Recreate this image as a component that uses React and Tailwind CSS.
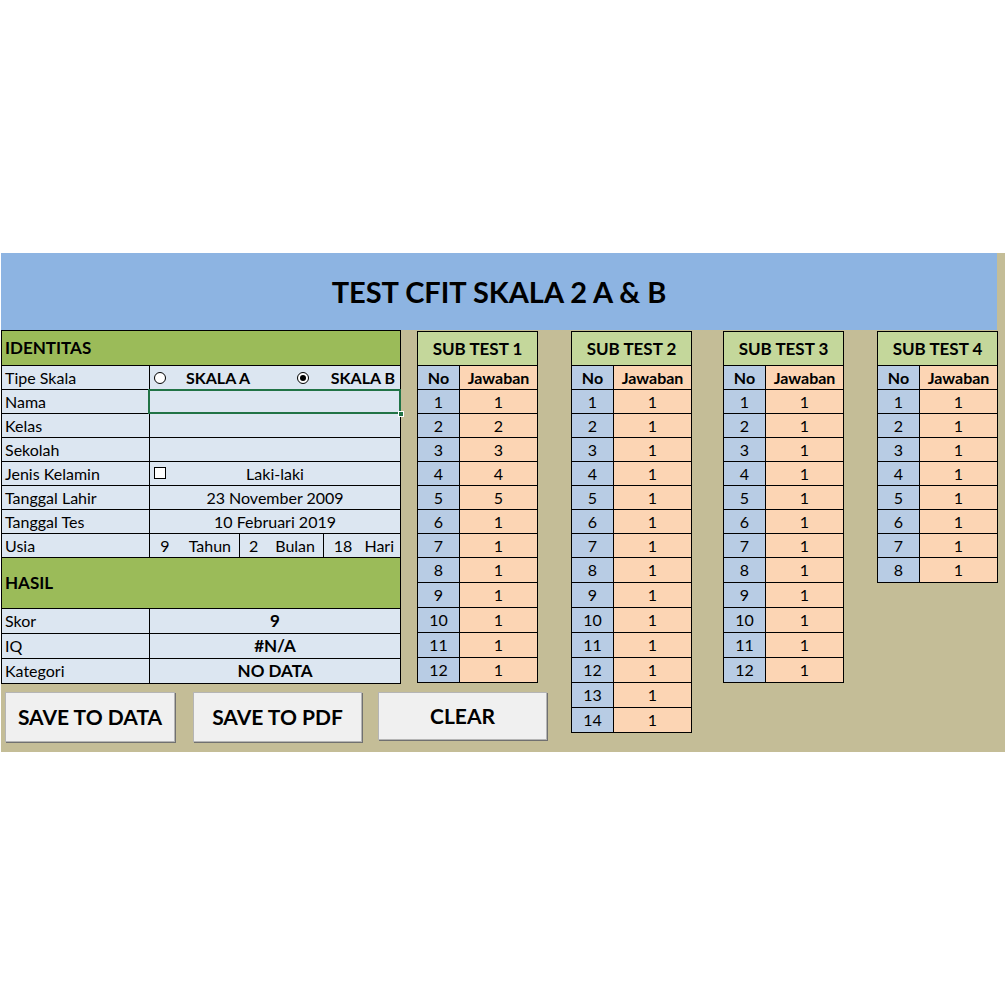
import React from "react";

const t1 = [1, 2, 3, 4, 5, 1, 1, 1, 1, 1, 1, 1];
const t2 = Array(14).fill(1);
const t3 = Array(12).fill(1);
const t4 = Array(8).fill(1);

function SubTable({ title, answers }) {
  return (
    <div className="mt-[1px] w-[121px] border-l border-r border-black">
      <div className="h-[35px] border-t border-b border-black bg-[#C4D79B] flex items-center justify-center font-bold text-[17px]">
        {title}
      </div>
      <div className="flex h-[24px] border-b border-black font-bold text-[16px]">
        <div className="w-[42px] border-r border-black bg-[#B8CCE4] flex items-center justify-center">No</div>
        <div className="flex-1 bg-[#FCD5B4] flex items-center justify-center">Jawaban</div>
      </div>
      {answers.map((a, i) => (
        <div key={i} className={`flex border-b border-black text-[16px] ${i < 7 ? "h-[24px]" : "h-[25px]"}`}>
          <div className="w-[42px] border-r border-black bg-[#B8CCE4] flex items-center justify-center">{i + 1}</div>
          <div className="flex-1 bg-[#FCD5B4] flex items-center justify-center">{a}</div>
        </div>
      ))}
    </div>
  );
}

function Row({ label, h = "h-[24px]", children, valueClass = "" }) {
  return (
    <div className={`flex border-b border-black ${h}`}>
      <div className="w-[148px] shrink-0 border-r border-black flex items-center pl-[3px] text-[16px]">{label}</div>
      <div className={`flex-1 relative flex items-center ${valueClass}`}>{children}</div>
    </div>
  );
}

function Radio({ checked }) {
  return (
    <span className="w-[12px] h-[12px] rounded-full border border-black bg-white flex items-center justify-center shrink-0">
      {checked && <span className="w-[6px] h-[6px] rounded-full bg-black" />}
    </span>
  );
}

function Button({ children, w, h = "h-[50px]" }) {
  return (
    <div className={`${w} ${h} shrink-0 bg-[#F0F0F0] border border-[#B5B5B5] shadow-[1px_1px_0_#707070] flex items-center justify-center font-bold text-[21px]`}>
      {children}
    </div>
  );
}

export default function App() {
  return (
    <div className="w-[1005px] h-[1005px] bg-white pt-[253px] font-['Lato',sans-serif] text-black">
      <div className="ml-[1px] w-[1004px] bg-[#C4BD97] pb-[10px]">
        <div className="w-[996px] h-[77px] bg-[#8DB4E2] flex items-center justify-center font-bold text-[29px]">
          TEST CFIT SKALA 2 A &amp; B
        </div>
        <div className="grid grid-cols-[400px_16px_121px_33px_121px_31px_121px_33px_121px] items-start">
          {/* Left panel */}
          <div className="col-start-1 row-start-1 w-[400px] border-l border-r border-black bg-[#DCE6F1]">
            <div className="h-[36px] border-t border-b border-black bg-[#9BBB59] flex items-center pl-[3px] font-bold text-[17px]">
              IDENTITAS
            </div>
            <Row label="Tipe Skala">
              <span className="ml-[4px]"><Radio /></span>
              <span className="ml-[20px] font-bold text-[16px]">SKALA A</span>
              <span className="ml-[47px]"><Radio checked /></span>
              <span className="ml-auto mr-[5px] font-bold text-[16px]">SKALA B</span>
            </Row>
            <Row label="Nama">
              <div className="absolute -left-[2px] -top-[1px] -right-[1px] -bottom-[1px] border-2 border-[#217346]" />
              <div className="absolute -right-[4px] -bottom-[4px] w-[6px] h-[6px] bg-[#217346] border border-white" />
            </Row>
            <Row label="Kelas" />
            <Row label="Sekolah" />
            <Row label="Jenis Kelamin" valueClass="justify-center text-[16px]">
              <span className="absolute left-[4px] top-[5px] w-[12px] h-[12px] border border-black bg-white" />
              <span>Laki-laki</span>
            </Row>
            <Row label="Tanggal Lahir" valueClass="justify-center text-[16px]">
              23 November 2009
            </Row>
            <Row label="Tanggal Tes" valueClass="justify-center text-[16px]">
              10 Februari 2019
            </Row>
            <Row label="Usia" valueClass="text-[16px] items-stretch">
              <div className="w-[90px] border-r border-black flex items-center justify-end gap-[19px] pr-[8px]">
                <span>9</span>
                <span>Tahun</span>
              </div>
              <div className="w-[84px] border-r border-black flex items-center justify-end gap-[17px] pr-[8px]">
                <span>2</span>
                <span>Bulan</span>
              </div>
              <div className="flex-1 flex items-center justify-end gap-[12px] pr-[6px]">
                <span>18</span>
                <span>Hari</span>
              </div>
            </Row>
            <div className="h-[51px] border-b border-black bg-[#9BBB59] flex items-center pl-[3px] font-bold text-[17px]">
              HASIL
            </div>
            <Row label="Skor" h="h-[25px]" valueClass="justify-center font-bold text-[17px]">9</Row>
            <Row label="IQ" h="h-[25px]" valueClass="justify-center font-bold text-[17px]">#N/A</Row>
            <Row label="Kategori" h="h-[25px]" valueClass="justify-center font-bold text-[17px]">NO DATA</Row>
          </div>

          {/* Buttons */}
          <div className="col-start-1 col-end-4 row-start-2 flex mt-[8px] ml-[4px]">
            <Button w="w-[170px]">SAVE TO DATA</Button>
            <div className="ml-[18px] shrink-0"><Button w="w-[169px]">SAVE TO PDF</Button></div>
            <div className="ml-[16px] shrink-0"><Button w="w-[169px]" h="h-[48px]">CLEAR</Button></div>
          </div>

          <div className="col-start-3 row-start-1"><SubTable title="SUB TEST 1" answers={t1} /></div>
          <div className="col-start-5 row-start-1 row-span-2"><SubTable title="SUB TEST 2" answers={t2} /></div>
          <div className="col-start-7 row-start-1"><SubTable title="SUB TEST 3" answers={t3} /></div>
          <div className="col-start-9 row-start-1"><SubTable title="SUB TEST 4" answers={t4} /></div>
        </div>
      </div>
    </div>
  );
}
